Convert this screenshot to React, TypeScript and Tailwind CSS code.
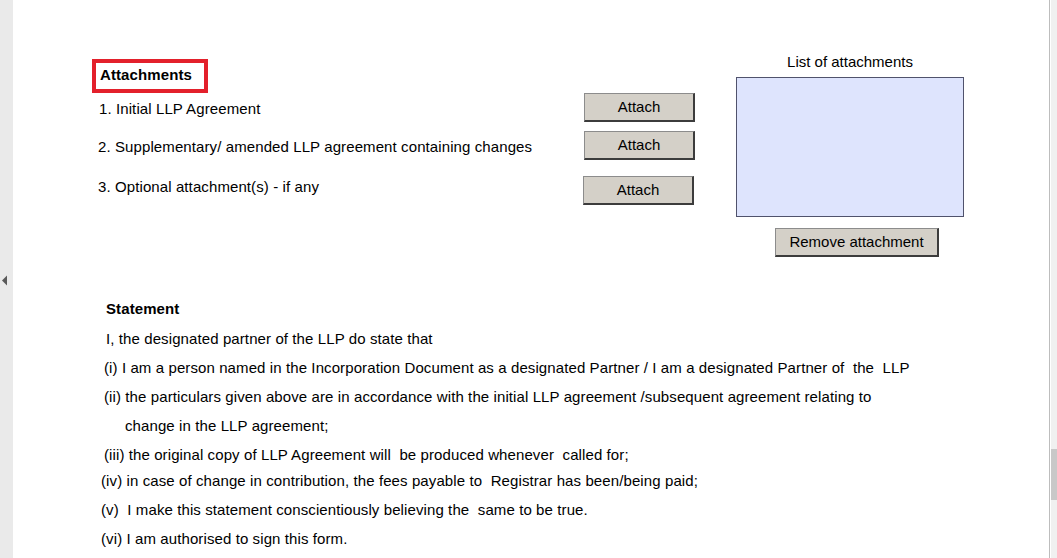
import React from "react";

const btn =
  "flex items-center justify-center bg-[#d4d0c8] border border-[#8c8c8c] border-r-2 border-b-2 border-r-[#3c3c3c] border-b-[#3c3c3c] pb-[2px] leading-none";

export default function App() {
  return (
    <div className="flex h-[558px] w-[1057px] overflow-hidden bg-white font-['Liberation_Sans',Arial,sans-serif] text-[15px] text-black">
      {/* left gutter with collapse arrow */}
      <div className="relative w-[13px] shrink-0 bg-[#eaeaea]">
        <svg className="absolute left-[1px] top-[275px]" width="7" height="11" viewBox="0 0 7 11">
          <path d="M6 0.5 L1 5.5 L6 10.5 Z" fill="#5a5a5a" />
        </svg>
      </div>

      <main className="flex-1 pl-[79px] tracking-[0.1px]">
        {/* attachments */}
        <section className="flex items-start pt-[53px]">
          <div className="mt-[6px] w-[492px]">
            <div className="flex h-[34px] w-[116px] items-center border-4 border-[#e3202b] pb-px pl-[4px] font-bold">
              Attachments
            </div>
            <p className="mt-[7px] pl-[7px] leading-[17px]">1. Initial LLP Agreement</p>
            <p className="mt-[21px] pl-[6px] leading-[17px]">2. Supplementary/ amended LLP agreement containing changes</p>
            <p className="mt-[23px] pl-[6px] leading-[17px]">3. Optional attachment(s) - if any</p>
          </div>

          <div className="mt-[40px] flex w-[111px] flex-col tracking-normal">
            <button className={`${btn} h-[29px] w-[111px]`}>Attach</button>
            <button className={`${btn} mt-[9px] h-[29px] w-[111px]`}>Attach</button>
            <button className={`${btn} -ml-px mt-[16px] h-[29px] w-[111px]`}>Attach</button>
          </div>

          <div className="ml-[41px] w-[228px] tracking-normal">
            <p className="h-[17px] text-center leading-[17px]">List of attachments</p>
            <div className="mt-[7px] h-[140px] w-[228px] border border-[#50526c] bg-[#dee4fd]" />
            <button className={`${btn} ml-[39px] mt-[11px] h-[29px] w-[164px]`}>Remove attachment</button>
          </div>
        </section>

        {/* statement */}
        <section className="mt-[37px] flex flex-col whitespace-pre leading-[29px]">
          <p className="h-[30px] pl-[14px] font-bold">Statement</p>
          <p className="pl-[14px]">I, the designated partner of the LLP do state that</p>
          <p className="pl-[12px]">(i) I am a person named in the Incorporation Document as a designated Partner / I am a designated Partner of  the  LLP</p>
          <p className="pl-[12px]">(ii) the particulars given above are in accordance with the initial LLP agreement /subsequent agreement relating to</p>
          <p className="pl-[33px]">change in the LLP agreement;</p>
          <p className="pl-[12px]">(iii) the original copy of LLP Agreement will  be produced whenever  called for;</p>
          <p className="-mt-[3px] pl-[9px]">(iv) in case of change in contribution, the fees payable to  Registrar has been/being paid;</p>
          <p className="pl-[9px]">(v)  I make this statement conscientiously believing the  same to be true.</p>
          <p className="pl-[9px]">(vi) I am authorised to sign this form.</p>
        </section>
      </main>

      {/* right edge + scrollbar */}
      <div className="w-px shrink-0 bg-[#bdbdbd]" />
      <div className="w-px shrink-0 bg-white" />
      <div className="relative w-[6px] shrink-0 bg-[#f0f0f0]">
        <div className="absolute left-0 top-[449px] h-[51px] w-[6px] bg-[#c8c8c8]" />
      </div>
    </div>
  );
}
